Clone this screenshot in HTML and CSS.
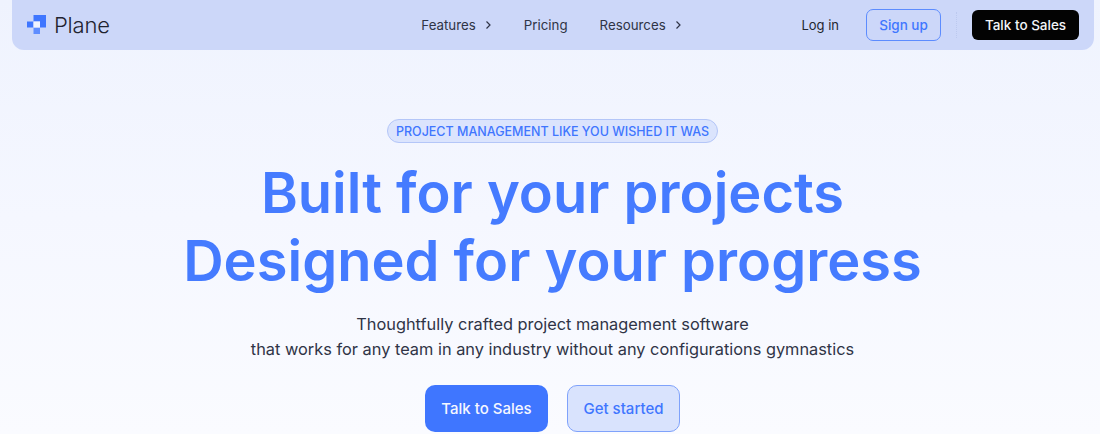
FILE: index.html
```html
<!DOCTYPE html>
<html lang="en">
<head>
    <meta charset="UTF-8">
    <title>Plane</title>
    <link rel="stylesheet" href="styles.css">
</head>
<body>
    <nav class="navbar">
        <a class="brand">
            <svg class="brand-icon" width="19" height="19" viewBox="0 0 19 19">
                <path fill="#3f76ff" d="M6.500 0H19V12.500H13V6.500H6.500Z"/>
                <path fill="#3f76ff" d="M0 6.500H6.500V12.500H0Z"/>
                <path fill="#5f8dff" d="M6.500 12.500H13V19H6.500Z"/>
                <path fill="#f0f3fe" d="M6.500 6.500H13V12.500H6.500Z"/>
            </svg>
            <span class="brand-name">Plane</span>
        </a>
        <div class="nav-links">
            <a class="nav-link">Features <svg class="chevron" width="7" height="10" viewBox="0 0 7 10"><path d="M1.500 1.500L5 5L1.500 8.500" fill="none" stroke="#2f3446" stroke-width="1.200"/></svg></a>
            <a class="nav-link">Pricing</a>
            <a class="nav-link">Resources <svg class="chevron" width="7" height="10" viewBox="0 0 7 10"><path d="M1.500 1.500L5 5L1.500 8.500" fill="none" stroke="#2f3446" stroke-width="1.200"/></svg></a>
        </div>
        <div class="nav-actions">
            <a class="login">Log in</a>
            <a class="signup">Sign up</a>
            <span class="divider"></span>
            <a class="sales-black">Talk to Sales</a>
        </div>
    </nav>

    <main class="hero">
        <div class="tagline">PROJECT MANAGEMENT LIKE YOU WISHED IT WAS</div>
        <h1>Built for your projects<br>Designed for your progress</h1>
        <p>Thoughtfully crafted project management software<br>that works for any team in any industry without any configurations gymnastics</p>
        <div class="cta">
            <a class="btn btn-primary">Talk to Sales</a>
            <a class="btn btn-secondary">Get started</a>
        </div>
    </main>
</body>
</html>
```

FILE: styles.css
```css
html, body {
    height: 100%;
}

body {
    margin: 0;
    overflow: hidden;
    font-family: Inter, "Liberation Sans", sans-serif;
    color: #2f3446;
    background: linear-gradient(#eff3fe 0%, #f5f7ff 50%, #fafbff 100%);
}

.navbar {
    display: grid;
    grid-template-columns: 1fr auto 1fr;
    align-items: center;
    height: 50px;
    margin: 0 6px 0 12px;
    padding: 0 15px;
    background-color: #ccd7f9;
    border-radius: 0 0 12px 12px;
}

.brand {
    display: flex;
    align-items: center;
    gap: 8px;
}

.brand-icon {
    display: block;
    margin-bottom: 2px;
}

.brand-name {
    font-size: 22px;
    font-weight: 300;
    letter-spacing: -0.2px;
    color: #1f2330;
}

.nav-links {
    display: flex;
    align-items: center;
    gap: 32px;
    margin-left: -3px;
    font-size: 13.300px;
}

.nav-link {
    display: flex;
    align-items: center;
    gap: 9px;
}

.nav-actions {
    display: flex;
    align-items: center;
    justify-content: flex-end;
    font-size: 13.500px;
}

.login {
    margin-right: 27px;
    font-size: 13px;
    color: #23262f;
}

.signup {
    display: flex;
    align-items: center;
    justify-content: center;
    box-sizing: border-box;
    width: 75px;
    height: 32px;
    font-weight: 500;
    color: #3f76ff;
    border: 1px solid #5c8cff;
    border-radius: 7px;
}

.divider {
    width: 0;
    height: 26px;
    margin: 0 15px;
    border-left: 1px dotted #bcc9ef;
}

.sales-black {
    display: flex;
    align-items: center;
    justify-content: center;
    width: 107px;
    height: 30px;
    font-weight: 500;
    color: #f4f5f8;
    background-color: #030303;
    border-radius: 6px;
}

.hero {
    display: flex;
    flex-direction: column;
    align-items: center;
    padding: 69px 0 0 5px;
}

.tagline {
    padding: 0 8px;
    height: 22px;
    line-height: 23px;
    font-size: 12.500px;
    font-weight: 500;
    color: #3f76ff;
    background-color: #dbe4fd;
    border: 1px solid #b4c6f8;
    border-radius: 12px;
}

h1 {
    margin: 16px 0 0;
    font-size: 56px;
    font-weight: 600;
    line-height: 68px;
    text-align: center;
    color: #457bff;
}

.hero p {
    margin: 17px 0 0;
    font-size: 16.350px;
    line-height: 25px;
    text-align: center;
    color: #2f3446;
}

.cta {
    display: flex;
    gap: 19px;
    margin-top: 23px;
}

.btn {
    display: flex;
    align-items: center;
    justify-content: center;
    box-sizing: border-box;
    height: 47px;
    font-size: 15px;
    font-weight: 500;
    border-radius: 10px;
}

.btn-primary {
    width: 123px;
    color: #f5f7ff;
    background-color: #3f76ff;
}

.btn-secondary {
    width: 113px;
    color: #3f76ff;
    background-color: #d9e3fd;
    border: 1px solid #7fa2fb;
}
```
